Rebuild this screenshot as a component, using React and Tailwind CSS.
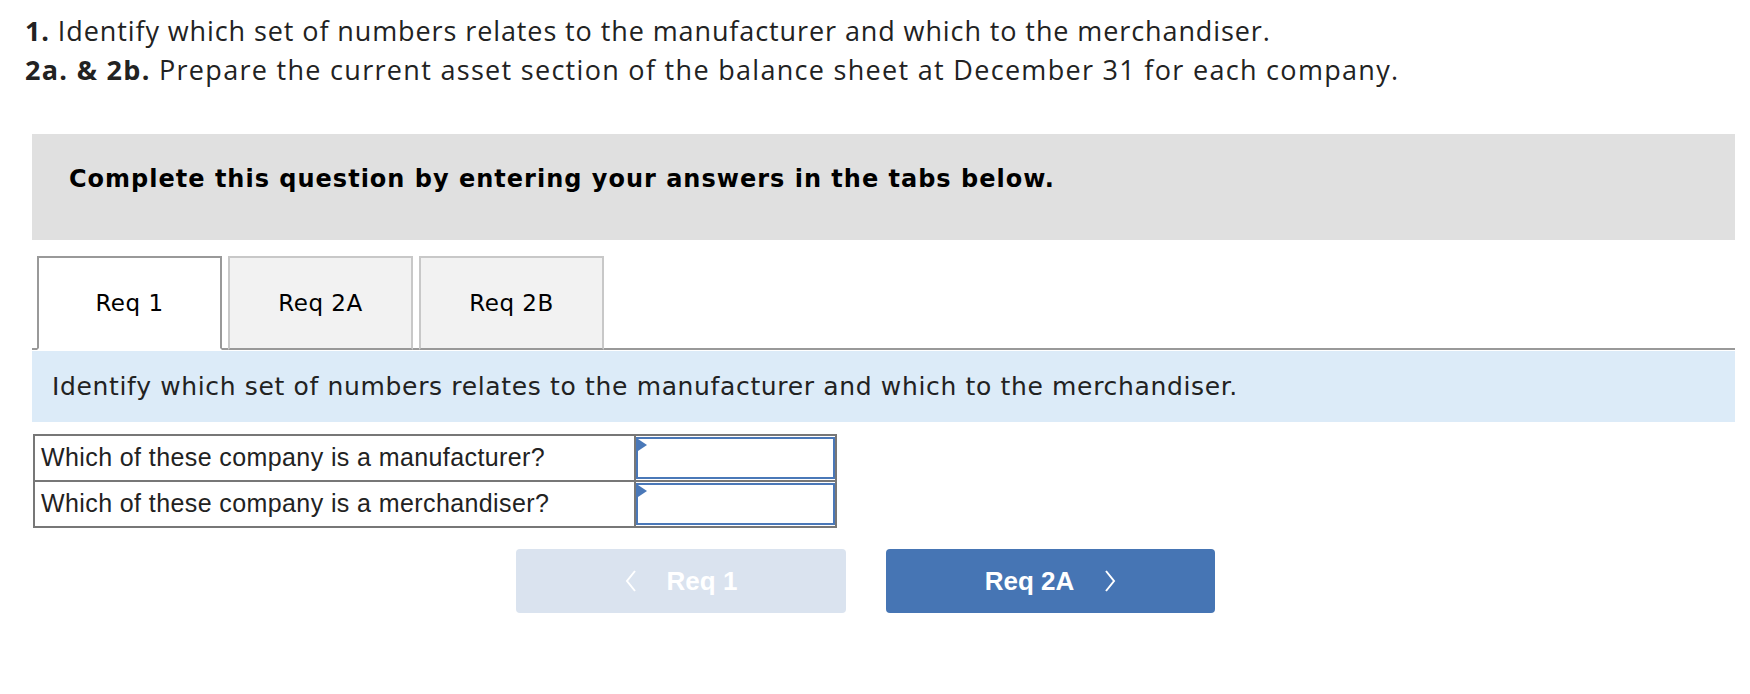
// Pregunta con pestañas: Req 1 / Req 2A / Req 2B
import { useState } from 'react'

const TABS = ['Req 1', 'Req 2A', 'Req 2B']

// ── CHEVRON ───────────────────────────────────────────────────
function Chevron({ dir }) {
  return (
    <svg width="12" height="24" viewBox="0 0 12 24" className="flex-shrink-0">
      <polyline
        points={dir === 'left' ? '10,2 2,12 10,22' : '2,2 10,12 2,22'}
        fill="none"
        stroke="white"
        strokeWidth="2"
      />
    </svg>
  )
}

// ── CELDA DE RESPUESTA ────────────────────────────────────────
function CeldaRespuesta() {
  return (
    <td className="w-[201px] border-2 border-[#777] p-0">
      <div className="relative h-[42px] border-2 border-[#4a78b8] bg-white">
        {/* triángulo del desplegable */}
        <span className="absolute left-0 top-0 w-0 h-0 border-t-[6px] border-b-[6px] border-l-[9px] border-t-transparent border-b-transparent border-l-[#4a78b8]" />
      </div>
    </td>
  )
}

export default function App() {
  const [activa, setActiva] = useState(0)

  return (
    <div className="bg-white min-h-screen pl-[32px] pr-[15px] pt-[11px] text-[#222]">

      {/* Enunciado */}
      <div className="-ml-[7px] text-[27px] leading-[39px] [font-family:'Open_Sans',Lato,sans-serif]">
        <p className="tracking-[0.9px]"><b>1.</b> Identify which set of numbers relates to the manufacturer and which to the merchandiser.</p>
        <p className="tracking-[1.3px]"><b>2a. &amp; 2b.</b> Prepare the current asset section of the balance sheet at December 31 for each company.</p>
      </div>

      {/* Caja gris */}
      <div className="mt-[45px] h-[106px] bg-[#e0e0e0] pl-[37px] pt-[29px]">
        <p className="text-[24px] leading-[32px] tracking-[1px] font-bold text-black [font-family:'DejaVu_Sans',Verdana,sans-serif]">
          Complete this question by entering your answers in the tabs below.
        </p>
      </div>

      {/* Pestañas */}
      <div className="mt-[16px] flex gap-[6px] pl-[5px] border-b-2 border-[#999] [font-family:'DejaVu_Sans',Verdana,sans-serif]">
        {TABS.map((t, i) => (
          <button
            key={t}
            onClick={() => setActiva(i)}
            className={`w-[185px] h-[94px] -mb-[2px] text-[23px] tracking-[0.5px] text-black ${
              activa === i
                ? 'bg-white border-2 border-[#999] border-b-white'
                : 'bg-[#f2f2f2] border-2 border-[#c8c8c8] border-b-[#999]'
            }`}
          >
            {t}
          </button>
        ))}
      </div>

      {/* Instrucción */}
      <div className="mt-[1px] h-[71px] bg-[#dcebf8] pl-[20px] flex items-center [font-family:'DejaVu_Sans',Verdana,sans-serif] text-[25px] tracking-[0.65px] text-[#222]">
        Identify which set of numbers relates to the manufacturer and which to the merchandiser.
      </div>

      {/* Tabla */}
      <table className="mt-[12px] ml-px border-collapse [font-family:'Liberation_Sans',Arial,sans-serif] text-[25px] tracking-[0.4px] text-[#222]">
        <tbody>
          <tr className="h-[46px]">
            <td className="w-[601px] border-2 border-[#777] pl-[6px]">Which of these company is a manufacturer?</td>
            <CeldaRespuesta />
          </tr>
          <tr className="h-[46px]">
            <td className="w-[601px] border-2 border-[#777] pl-[6px]">Which of these company is a merchandiser?</td>
            <CeldaRespuesta />
          </tr>
        </tbody>
      </table>

      {/* Navegación */}
      <div className="mt-[21px] ml-[484px] flex gap-[40px] [font-family:'Liberation_Sans',Arial,sans-serif] text-[26px] font-bold text-white">
        <button className="w-[330px] h-[64px] rounded-[4px] bg-[#dae3ef] flex items-center justify-center gap-[30px]">
          <Chevron dir="left" />
          <span>Req 1</span>
        </button>
        <button className="w-[329px] h-[64px] rounded-[4px] bg-[#4675b4] flex items-center justify-center gap-[30px]">
          <span>Req 2A</span>
          <Chevron dir="right" />
        </button>
      </div>

    </div>
  )
}
